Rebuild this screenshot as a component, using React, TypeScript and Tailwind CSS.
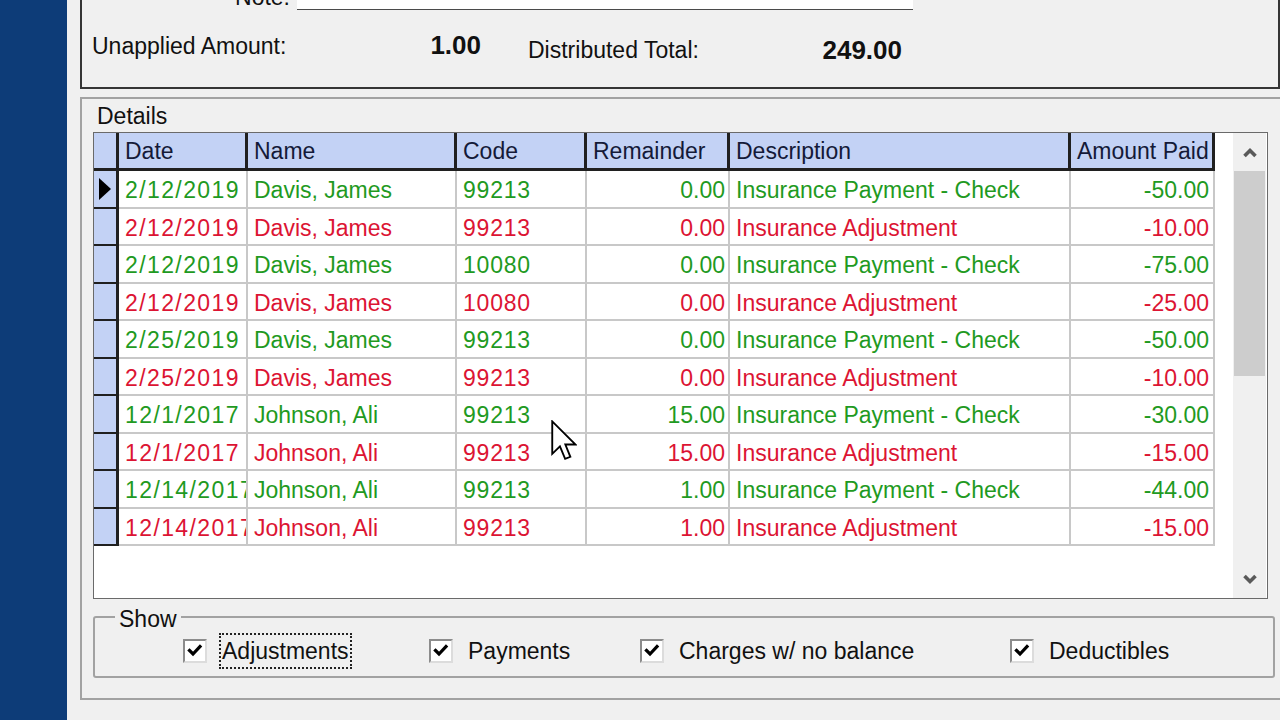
import React from "react";

type Row = {
  date: string;
  name: string;
  code: string;
  rem: string;
  desc: string;
  amt: string;
  pay: boolean;
};

const rows: Row[] = [
  { date: "2/12/2019", name: "Davis, James", code: "99213", rem: "0.00", desc: "Insurance Payment - Check", amt: "-50.00", pay: true },
  { date: "2/12/2019", name: "Davis, James", code: "99213", rem: "0.00", desc: "Insurance Adjustment", amt: "-10.00", pay: false },
  { date: "2/12/2019", name: "Davis, James", code: "10080", rem: "0.00", desc: "Insurance Payment - Check", amt: "-75.00", pay: true },
  { date: "2/12/2019", name: "Davis, James", code: "10080", rem: "0.00", desc: "Insurance Adjustment", amt: "-25.00", pay: false },
  { date: "2/25/2019", name: "Davis, James", code: "99213", rem: "0.00", desc: "Insurance Payment - Check", amt: "-50.00", pay: true },
  { date: "2/25/2019", name: "Davis, James", code: "99213", rem: "0.00", desc: "Insurance Adjustment", amt: "-10.00", pay: false },
  { date: "12/1/2017", name: "Johnson, Ali", code: "99213", rem: "15.00", desc: "Insurance Payment - Check", amt: "-30.00", pay: true },
  { date: "12/1/2017", name: "Johnson, Ali", code: "99213", rem: "15.00", desc: "Insurance Adjustment", amt: "-15.00", pay: false },
  { date: "12/14/2017", name: "Johnson, Ali", code: "99213", rem: "1.00", desc: "Insurance Payment - Check", amt: "-44.00", pay: true },
  { date: "12/14/2017", name: "Johnson, Ali", code: "99213", rem: "1.00", desc: "Insurance Adjustment", amt: "-15.00", pay: false },
];

function HeaderCell({ w, label }: { w: string; label: string }) {
  return (
    <div
      className={`${w} h-full flex items-center pl-[6px] bg-[#c3d2f5] border-r-[3px] border-b-[3px] border-[#202020] text-[#141a38] whitespace-nowrap overflow-hidden`}
    >
      {label}
    </div>
  );
}

function CheckBox() {
  return (
    <div className="w-[24px] h-[24px] bg-white border-2 border-t-[#8c8c8c] border-l-[#8c8c8c] border-r-[#dcdcdc] border-b-[#dcdcdc] flex items-center justify-center">
      <svg width="16" height="16" viewBox="0 0 16 16">
        <path d="M2.5 7.5 L6 11 L13 3.5" fill="none" stroke="#000" strokeWidth="3.2" strokeLinecap="square" />
      </svg>
    </div>
  );
}

function Chevron({ up }: { up: boolean }) {
  return (
    <svg width="16" height="11" viewBox="0 0 16 11">
      <path
        d={up ? "M2.5 9 L8 3.5 L13.5 9" : "M2.5 2 L8 7.5 L13.5 2"}
        fill="none"
        stroke="#5a5a5a"
        strokeWidth="3.6"
      />
    </svg>
  );
}

export default function App() {
  return (
    <div
      className="relative w-[1280px] h-[720px] overflow-hidden flex bg-[#f0f0f0] text-[23px] leading-[26px] text-[#111]"
      style={{ fontFamily: '"Liberation Sans", Arial, sans-serif' }}
    >
      {/* left blue strip */}
      <div className="w-[67px] h-full bg-[#0d3c78] shrink-0" />

      {/* main area */}
      <div className="flex flex-col pl-[13px] w-[1213px]">
        {/* top group box */}
        <div className="w-[1200px] h-[89px] border-l-2 border-r-2 border-b-2 border-[#353535] flex flex-col">
          <div className="flex items-end h-[30px] -mt-[20px]">
            <div className="w-[208px] text-right">Note:</div>
            <div className="ml-[7px] w-[616px] h-[30px] bg-white border-b-[1.5px] border-[#4a4a4a]" />
          </div>
          <div className="flex items-center mt-[23px] pl-[10px] h-[26px]">
            <div className="w-[389px] flex items-center justify-between">
              <span>Unapplied Amount:</span>
              <span className="font-bold text-[26px] -mt-[3px]">1.00</span>
            </div>
            <div className="ml-[47px] w-[374px] flex items-center justify-between mt-[7px]">
              <span>Distributed Total:</span>
              <span className="font-bold text-[26px]">249.00</span>
            </div>
          </div>
        </div>

        {/* details panel */}
        <div className="mt-[8px] w-[1204px] h-[603px] border-2 border-[#a2a2a2] flex flex-col">
          <div className="ml-[15px] mt-[4px] h-[26px]">Details</div>

          {/* grid */}
          <div className="ml-[11px] mt-[3px] w-[1175px] h-[467px] border border-[#6a6a6a] bg-white flex">
            <div className="w-[1139px] flex flex-col">
              {/* header */}
              <div className="flex h-[38px] shrink-0">
                <div className="w-[25px] h-full bg-[#c3d2f5] border-r-[3px] border-b-[3px] border-[#202020]" />
                <HeaderCell w="w-[129px]" label="Date" />
                <HeaderCell w="w-[209px]" label="Name" />
                <HeaderCell w="w-[130px]" label="Code" />
                <HeaderCell w="w-[143px]" label="Remainder" />
                <HeaderCell w="w-[341px]" label="Description" />
                <HeaderCell w="w-[144px]" label="Amount Paid" />
              </div>
              {rows.map((r, i) => (
                <div
                  key={i}
                  className={`flex h-[37.5px] shrink-0 ${r.pay ? "text-[#1f9a22]" : "text-[#dc1433]"}`}
                >
                  <div className="w-[25px] h-full bg-[#c3d2f5] border-r-[3px] border-b-2 border-[#202020] flex items-center justify-center">
                    {i === 0 && (
                      <svg width="14" height="22" viewBox="0 0 14 22">
                        <path d="M1 0 L13 11 L1 22 Z" fill="#000" />
                      </svg>
                    )}
                  </div>
                  <div className="w-[129px] h-full flex items-center pl-[6px] pt-[3px] tracking-[1.4px] border-r-2 border-b-2 border-[#c8c8c8] whitespace-nowrap overflow-hidden">
                    {r.date}
                  </div>
                  <div className="w-[209px] h-full flex items-center pl-[6px] pt-[3px] border-r-2 border-b-2 border-[#c8c8c8] whitespace-nowrap overflow-hidden">
                    {r.name}
                  </div>
                  <div className="w-[130px] h-full flex items-center pl-[6px] pt-[3px] tracking-[0.8px] border-r-2 border-b-2 border-[#c8c8c8] whitespace-nowrap overflow-hidden">
                    {r.code}
                  </div>
                  <div className="w-[143px] h-full flex items-center justify-end pr-[3px] pt-[3px] border-r-2 border-b-2 border-[#c8c8c8] whitespace-nowrap overflow-hidden">
                    {r.rem}
                  </div>
                  <div className="w-[341px] h-full flex items-center pl-[6px] pt-[3px] border-r-2 border-b-2 border-[#c8c8c8] whitespace-nowrap overflow-hidden">
                    {r.desc}
                  </div>
                  <div className="w-[144px] h-full flex items-center justify-end pr-[4px] pt-[3px] border-r-2 border-b-2 border-[#c8c8c8] whitespace-nowrap overflow-hidden">
                    {r.amt}
                  </div>
                </div>
              ))}
            </div>
            {/* scrollbar */}
            <div className="w-[33px] h-full bg-[#f0f0f0] flex flex-col">
              <div className="h-[38px] flex items-center justify-center">
                <Chevron up />
              </div>
              <div className="mx-[1px] h-[205px] bg-[#cdcdcd]" />
              <div className="flex-1" />
              <div className="h-[38px] flex items-center justify-center">
                <Chevron up={false} />
              </div>
            </div>
          </div>

          {/* Show group */}
          <div className="relative ml-[11px] mt-[17px] w-[1182px] h-[62px] border-2 border-[#a2a2a2] rounded-[3px] flex items-center pt-[8px]">
            <div className="absolute -top-[12px] left-[20px] px-[4px] bg-[#f0f0f0]">Show</div>
            <div className="ml-[88px] w-[246px] flex items-center">
              <CheckBox />
              <div className="ml-[12px] px-[1px] border-2 border-dotted border-[#222] h-[36px] flex items-center">
                Adjustments
              </div>
            </div>
            <div className="w-[211px] flex items-center">
              <CheckBox />
              <span className="ml-[15px]">Payments</span>
            </div>
            <div className="w-[370px] flex items-center">
              <CheckBox />
              <span className="ml-[15px]">Charges w/ no balance</span>
            </div>
            <div className="flex items-center">
              <CheckBox />
              <span className="ml-[15px]">Deductibles</span>
            </div>
          </div>
        </div>
      </div>

      {/* mouse cursor */}
      <svg
        className="absolute left-[551px] top-[420px]"
        width="26"
        height="42"
        viewBox="0 0 12.5 20"
      >
        <path
          d="M0.6 0.6 L0.6 16.2 L4.3 12.6 L6.8 18.6 L9.3 17.6 L6.9 11.7 L11.8 11.7 Z"
          fill="#fff"
          stroke="#000"
          strokeWidth="0.9"
          strokeLinejoin="miter"
        />
      </svg>
    </div>
  );
}
